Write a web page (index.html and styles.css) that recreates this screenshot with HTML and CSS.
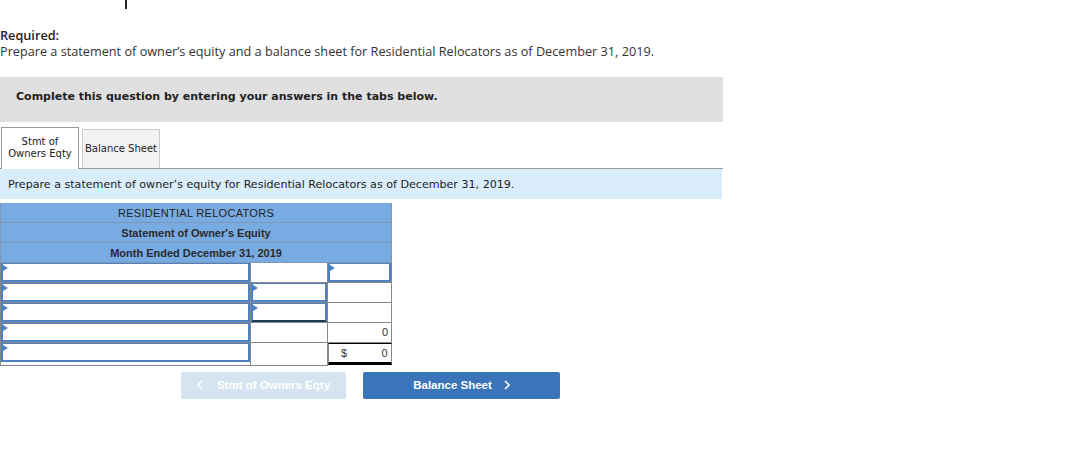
FILE: index.html
```html
<!DOCTYPE html>
<html lang="en">
<head>
    <meta charset="UTF-8">
    <title>Residential Relocators</title>
    <link rel="stylesheet" href="styles.css">
</head>
<body>
    <div class="caret"></div>

    <div class="required">
        <strong>Required:</strong>
        <p>Prepare a statement of owner’s equity and a balance sheet for Residential Relocators as of December 31, 2019.</p>
    </div>

    <div class="notice">Complete this question by entering your answers in the tabs below.</div>

    <!-- Tabs -->
    <ul class="tabs">
        <li class="tab active">Stmt of<br>Owners Eqty</li>
        <li class="tab">Balance Sheet</li>
    </ul>

    <div class="instructions">Prepare a statement of owner’s equity for Residential Relocators as of December 31, 2019.</div>

    <!-- Worksheet -->
    <table class="sheet">
        <colgroup>
            <col class="c-label">
            <col class="c-mid">
            <col class="c-right">
        </colgroup>
        <tr class="head"><th colspan="3" class="title">RESIDENTIAL RELOCATORS</th></tr>
        <tr class="head"><th colspan="3">Statement of Owner's Equity</th></tr>
        <tr class="head"><th colspan="3">Month Ended December 31, 2019</th></tr>
        <tr>
            <td><div class="field"></div></td>
            <td></td>
            <td><div class="field"></div></td>
        </tr>
        <tr>
            <td><div class="field"></div></td>
            <td><div class="field"></div></td>
            <td></td>
        </tr>
        <tr>
            <td><div class="field"></div></td>
            <td><div class="field dark-bottom"></div></td>
            <td></td>
        </tr>
        <tr>
            <td><div class="field"></div></td>
            <td></td>
            <td class="num">0</td>
        </tr>
        <tr>
            <td><div class="field"></div></td>
            <td></td>
            <td class="num total"><span>$</span><span>0</span></td>
        </tr>
    </table>

    <div class="nav-buttons">
        <button class="nav-btn prev">
            <svg width="6" height="10" viewBox="0 0 6 10"><path d="M5 1 L1 5 L5 9" fill="none" stroke="white" stroke-width="1.6"/></svg>
            Stmt of Owners Eqty
        </button>
        <button class="nav-btn next">
            Balance Sheet
            <svg width="6" height="10" viewBox="0 0 6 10"><path d="M1 1 L5 5 L1 9" fill="none" stroke="white" stroke-width="1.6"/></svg>
        </button>
    </div>
</body>
</html>
```

FILE: styles.css
```css
/* General Styling */
body {
    margin: 0;
    padding: 0;
    background: white;
    color: #222;
    font-family: 'Open Sans', sans-serif;
}

.caret {
    width: 2px;
    height: 9px;
    margin-left: 125px;
    background: #222;
}

/* Required block */
.required {
    margin-top: 18px;
    font-size: 12.7px;
    line-height: 16px;
    color: #333;
}

.required strong {
    display: block;
    font-weight: 600;
    color: #222;
}

.required p {
    margin: 0;
}

/* Gray notice bar */
.notice {
    width: 707px;
    height: 45px;
    margin-top: 18px;
    padding-left: 16px;
    background: #e0e0e0;
    font-family: 'DejaVu Sans', Verdana, sans-serif;
    font-size: 11px;
    font-weight: bold;
    line-height: 40px;
    color: #222;
}

/* Tabs */
.tabs {
    list-style: none;
    margin: 5px 0 0 0;
    padding: 0 0 0 1px;
    display: flex;
    align-items: flex-end;
    gap: 3px;
    width: 722px;
    border-bottom: 1px solid #999;
    font-family: 'DejaVu Sans', Verdana, sans-serif;
    font-size: 10px;
}

.tab {
    width: 76px;
    height: 38px;
    display: flex;
    align-items: center;
    justify-content: center;
    text-align: center;
    line-height: 12px;
    background: #f2f2f2;
    border: 1px solid #ccc;
    border-bottom: none;
    color: #222;
}

.tab.active {
    height: 40px;
    background: white;
    border-color: #999;
    margin-bottom: -1px;
    padding-bottom: 1px;
}

.instructions {
    width: 714px;
    height: 30px;
    padding-left: 8px;
    background: #daedfb;
    font-family: 'DejaVu Sans', Verdana, sans-serif;
    font-size: 11.1px;
    line-height: 31px;
    color: #222;
}

/* Worksheet table */
.sheet {
    margin-top: 4px;
    border-collapse: collapse;
    width: 391px;
    table-layout: fixed;
    font-family: 'Liberation Sans', Arial, sans-serif;
    font-size: 11px;
}

.c-label { width: 250px; }
.c-mid { width: 77px; }
.c-right { width: 64px; }

.sheet th {
    height: 19px;
    padding: 0;
    background: #79abe3;
    border: 1px solid #7f98b8;
    border-top: none;
    font-weight: bold;
    color: #2a2a2a;
    text-align: center;
}

.sheet th.title {
    font-weight: normal;
    letter-spacing: 0.3px;
    color: #222;
}

.sheet td {
    height: 18px;
    padding: 0;
    border: 1px solid #888;
    vertical-align: top;
}

.field {
    position: relative;
    height: 19px;
    box-sizing: border-box;
    border: 2px solid #4f80bf;
    border-top-width: 1px;
    background: white;
}

.field::before {
    content: "";
    position: absolute;
    top: 1px;
    left: 0;
    border-left: 5px solid #4f80bf;
    border-top: 3px solid transparent;
    border-bottom: 3px solid transparent;
}

.field.dark-bottom {
    border-bottom-color: #1f3b5c;
}

.sheet td.num {
    text-align: right;
    padding-right: 3px;
    line-height: 19px;
    color: #333;
}

.sheet td.total {
    display: flex;
    justify-content: space-between;
    padding-left: 12px;
    border-top: 1px solid black;
    border-bottom: 3px solid black;
}

/* Bottom navigation buttons */
.nav-buttons {
    display: flex;
    gap: 17px;
    margin: 6px 0 0 181px;
}

.nav-btn {
    height: 27px;
    display: flex;
    align-items: center;
    justify-content: center;
    gap: 12px;
    border: none;
    border-radius: 2px;
    color: white;
    font-family: 'Liberation Sans', Arial, sans-serif;
    font-size: 11.5px;
    font-weight: bold;
}

.nav-btn.prev {
    width: 165px;
    background: #d6e3f1;
    gap: 14px;
}

.nav-btn.next {
    width: 197px;
    background: #3a75ba;
}
```
